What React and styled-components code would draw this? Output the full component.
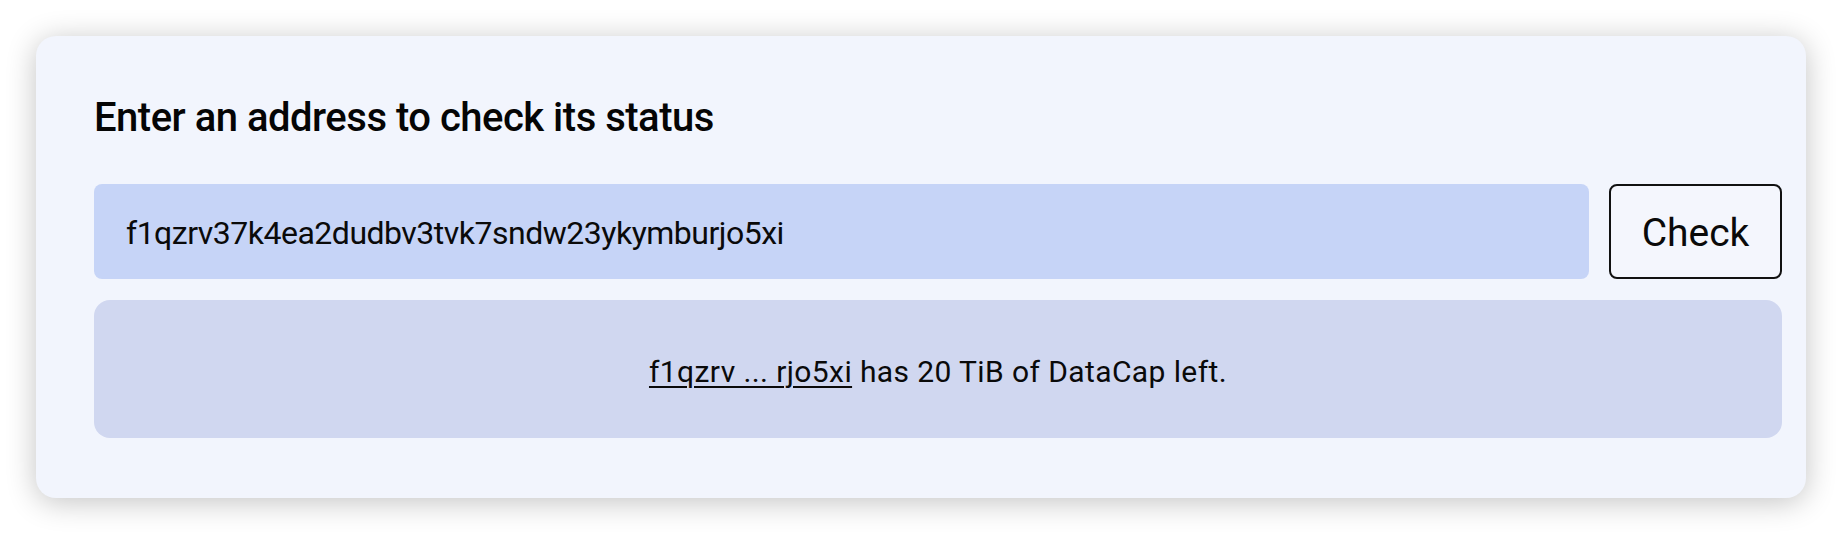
import React from "react";
import styled, { createGlobalStyle } from "styled-components";

const Global = createGlobalStyle`
  * { box-sizing: border-box; }
  html, body { margin: 0; padding: 0; background: #ffffff; }
  body { font-family: Roboto, "Liberation Sans", sans-serif; color: #0a0a0a; }
`;

const Page = styled.div`
  padding: 36px;
`;

const Card = styled.section`
  background: #f2f5fd;
  border-radius: 20px;
  box-shadow: 0 4px 30px rgba(0, 0, 0, 0.24);
  padding: 58px 24px 60px 58px;
  display: flex;
  flex-direction: column;
`;

const Title = styled.h2`
  margin: 0 0 42px;
  font-size: 40px;
  line-height: 48px;
  font-weight: 500;
  letter-spacing: -0.5px;
  color: #050505;
`;

const Row = styled.form`
  display: flex;
  gap: 20px;
  margin: 0 0 21px;
`;

const AddressInput = styled.input`
  flex: 1;
  height: 95px;
  border: none;
  outline: none;
  border-radius: 8px;
  background: #c6d4f7;
  padding: 3px 32px 0;
  font-family: Roboto, "Liberation Sans", sans-serif;
  font-size: 32px;
  letter-spacing: -0.5px;
  color: #0a0a0a;
`;

const CheckButton = styled.button`
  width: 173px;
  height: 95px;
  flex: none;
  background: #f4f6fd;
  border: 2px solid #111;
  border-radius: 8px;
  font-family: Roboto, "Liberation Sans", sans-serif;
  font-size: 39px;
  color: #0a0a0a;
  padding: 2px 0 0;
  cursor: pointer;
`;

const Result = styled.div`
  height: 138px;
  border-radius: 16px;
  background: #d0d7f0;
  display: flex;
  align-items: center;
  justify-content: center;
  font-size: 30px;
  letter-spacing: 0.4px;
  padding-top: 4px;
`;

const AddrLink = styled.a`
  color: #0a0a0a;
  text-decoration: underline;
  text-decoration-thickness: 2px;
  text-underline-offset: 4px;
`;

export default function App() {
  return (
    <>
      <Global />
      <Page>
        <Card>
          <Title>Enter an address to check its status</Title>
          <Row onSubmit={(e) => e.preventDefault()}>
            <AddressInput defaultValue="f1qzrv37k4ea2dudbv3tvk7sndw23ykymburjo5xi" />
            <CheckButton type="submit">Check</CheckButton>
          </Row>
          <Result>
            <span>
              <AddrLink href="#">f1qzrv ... rjo5xi</AddrLink> has 20 TiB of DataCap left.
            </span>
          </Result>
        </Card>
      </Page>
    </>
  );
}
